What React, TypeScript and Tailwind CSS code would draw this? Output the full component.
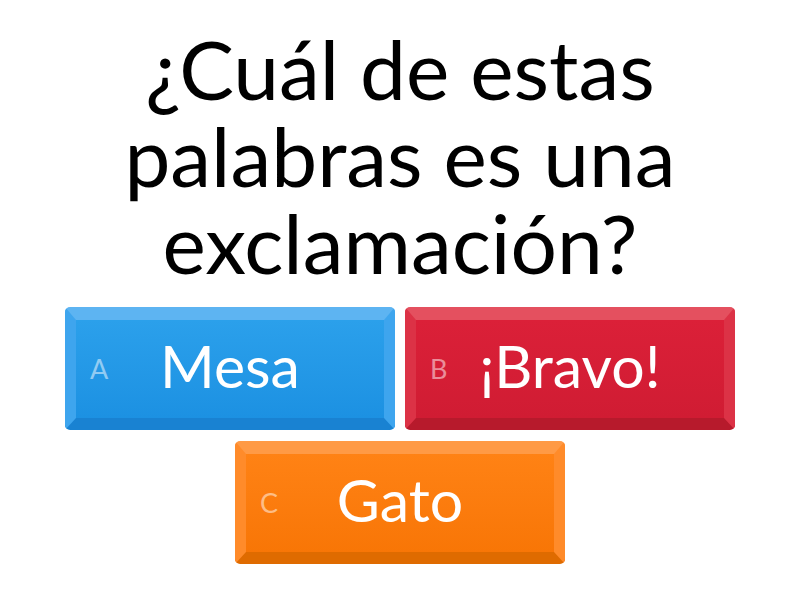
import React from 'react';

const answers = [
  {
    letter: 'A',
    text: 'Mesa',
    box: 'border-t-[#5db4f2] border-x-[#3ea5ee] border-b-[#1982d2] bg-gradient-to-b from-[#2ba0eb] to-[#1c91e2]',
  },
  {
    letter: 'B',
    text: '¡Bravo!',
    box: 'border-t-[#e4505f] border-x-[#dc3246] border-b-[#b71a2c] bg-gradient-to-b from-[#db2038] to-[#d01c33]',
  },
  {
    letter: 'C',
    text: 'Gato',
    box: 'border-t-[#ff9a45] border-x-[#ff8b2a] border-b-[#df6b00] bg-gradient-to-b from-[#ff8214] to-[#f87606]',
  },
];

const AnswerButton = ({ letter, text, box }: { letter: string; text: string; box: string }) => (
  <button
    className={`relative w-[330px] h-[123px] rounded-[5px] border-t-[13px] border-x-[11px] border-b-[12px] flex items-center justify-center ${box}`}
  >
    <span className="absolute left-[14px] top-1/2 -translate-y-1/2 text-[27px] text-white/50">{letter}</span>
    <span className="text-[59px] text-white leading-none pb-2">{text}</span>
  </button>
);

export default function App() {
  return (
    <div
      className="w-[800px] h-[600px] bg-white flex flex-col items-center"
      style={{ fontFamily: 'Lato, "Noto Sans", sans-serif' }}
    >
      <h1 className="mt-[25px] text-[82px] leading-[87px] text-black text-center w-[640px] font-normal">
        ¿Cuál de estas palabras es una exclamación?
      </h1>
      <div className="mt-[21px] flex flex-col items-center gap-[11px]">
        <div className="flex gap-[10px]">
          <AnswerButton {...answers[0]} />
          <AnswerButton {...answers[1]} />
        </div>
        <AnswerButton {...answers[2]} />
      </div>
    </div>
  );
}
